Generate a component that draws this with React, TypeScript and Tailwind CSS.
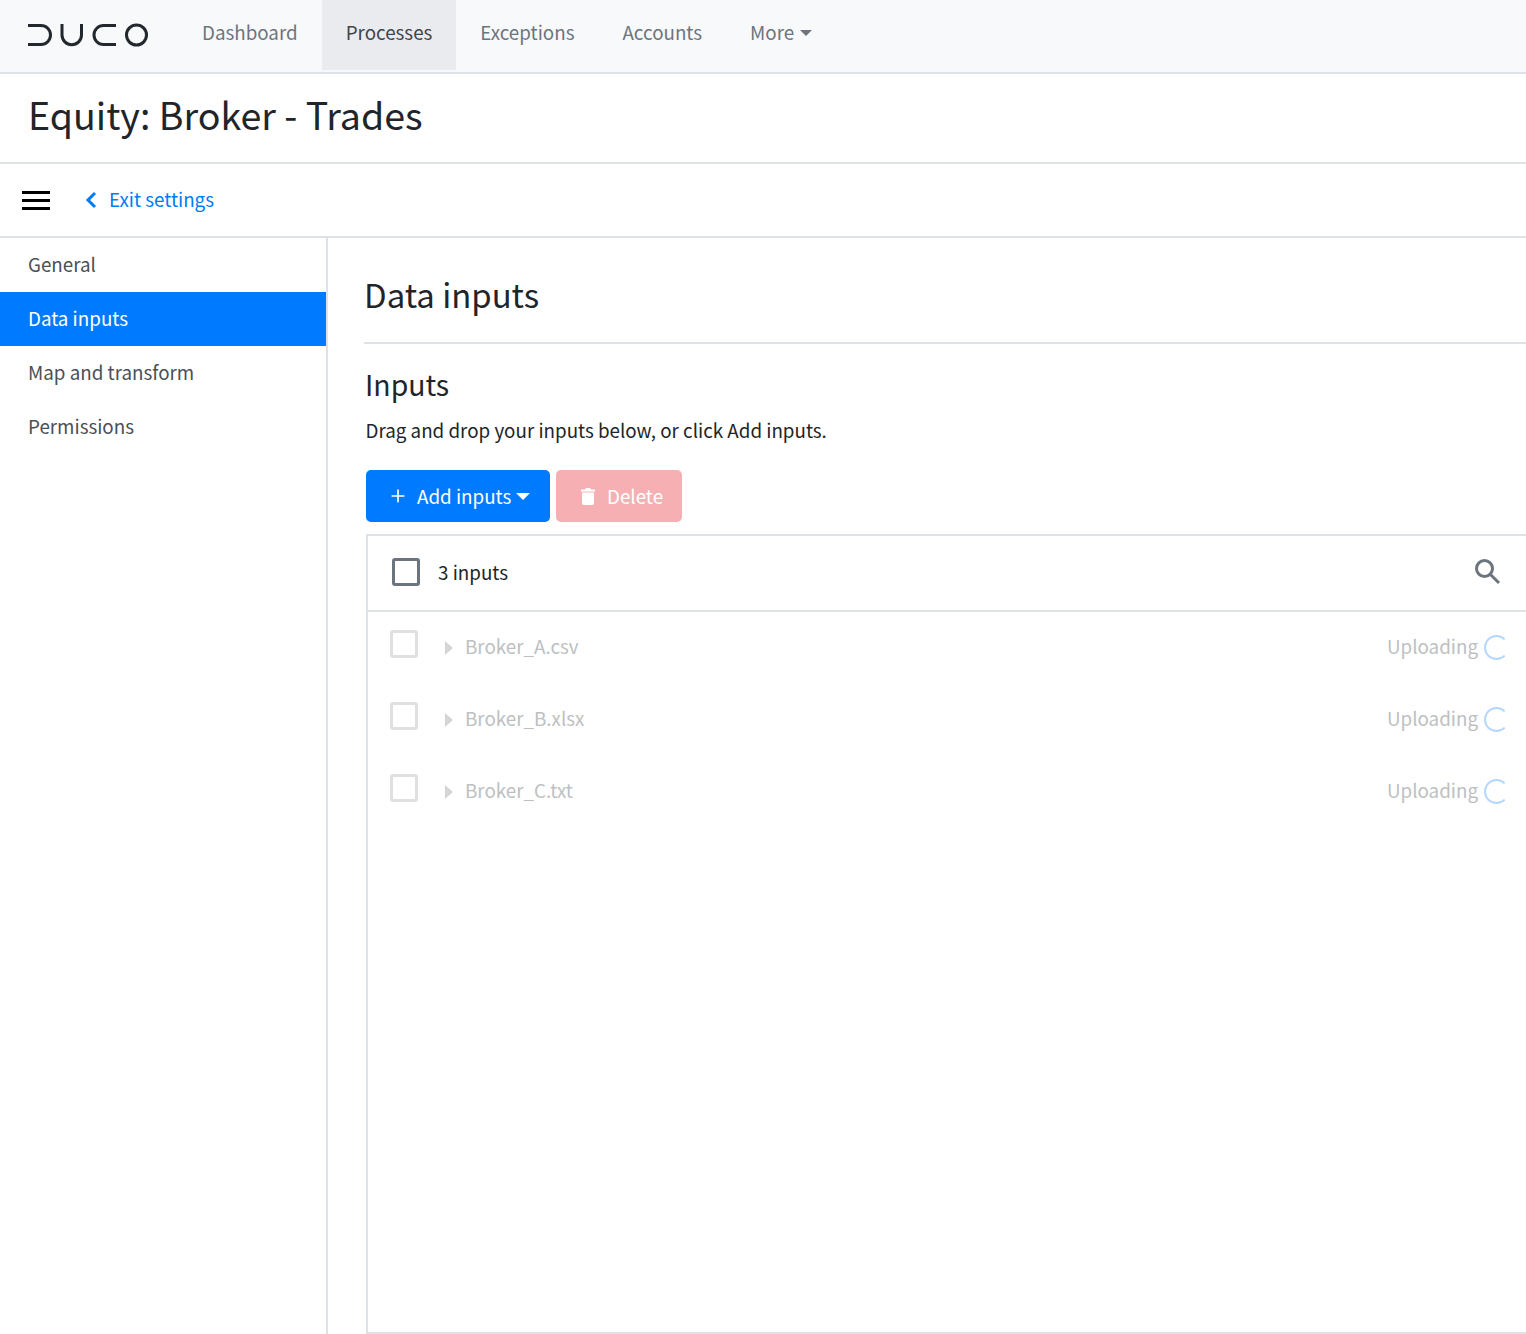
import { Plus } from "lucide-react";

function DucoLogo() {
  return (
    <svg width="122" height="24" viewBox="0 0 122 24" fill="none" stroke="#23272e" strokeWidth="3">
      <path d="M0 2.500 H13 A9.500 9.500 0 0 1 13 21.500 H0" />
      <path d="M34 1 V12 A9.500 9.500 0 0 0 53.500 12 V1" />
      <path d="M88 2.500 H75.500 A9.500 9.500 0 0 0 75.500 21.500 H88" />
      <circle cx="108.500" cy="12" r="10" />
    </svg>
  );
}

function NavItem({ label, active }: { label: string; active?: boolean }) {
  return (
    <div className={`h-[70px] px-6 flex items-center pb-[6px] text-[18.8px] ${active ? "bg-[#e9ebee] text-[#3f464d]" : "text-[#6c757d]"}`}>
      {label}
    </div>
  );
}

function Row({ name }: { name: string }) {
  return (
    <div className="h-[72px] flex items-center pl-[22px] pr-[17px] pb-[4px] text-[18.8px] text-[#bdbfc1]">
      <span className="w-[28px] h-[28px] border-[3px] border-[#dfe0e1] rounded-[3px] -mt-[4px]" />
      <span className="ml-[27px] mt-[4px] w-0 h-0 border-y-[7px] border-y-transparent border-l-[8px] border-l-[#d4d5d6]" />
      <span className="ml-[12px]">{name}</span>
      <span className="ml-auto">Uploading</span>
      <span className="ml-[6px] mt-[3px] w-[25px] h-[25px] rounded-full border-2 border-[#b3d7ff] border-r-transparent" />
    </div>
  );
}

export default function App() {
  return (
    <div className="h-[1334px] overflow-hidden bg-white flex flex-col font-['Noto_Sans_CJK_JP','Noto_Sans',sans-serif] text-[#212529]">
      <div className="h-[74px] shrink-0 bg-[#f8f9fa] border-b-2 border-[#dee2e6] flex items-start">
        <div className="pl-[28px] pt-[23px] w-[178px] shrink-0">
          <DucoLogo />
        </div>
        <NavItem label="Dashboard" />
        <NavItem label="Processes" active />
        <NavItem label="Exceptions" />
        <NavItem label="Accounts" />
        <div className="h-[70px] pl-6 pb-[6px] flex items-center gap-[6px] text-[18.8px] text-[#6c757d]">
          More <span className="mt-[2px] w-0 h-0 border-x-[6px] border-x-transparent border-t-[6px] border-t-[#6c757d]" />
        </div>
      </div>

      <div className="h-[90px] shrink-0 border-b-2 border-[#dee2e6] flex items-center pb-[8px] pl-[28px] text-[37.6px] text-[#212529]">
        Equity: Broker - Trades
      </div>

      <div className="h-[74px] shrink-0 border-b-2 border-[#dee2e6] flex items-center">
        <div className="ml-[22px] w-[28px] flex flex-col gap-[5px]">
          <span className="h-[3px] bg-black" />
          <span className="h-[3px] bg-black" />
          <span className="h-[3px] bg-black" />
        </div>
        <svg className="ml-[35px]" width="12" height="18" viewBox="0 0 12 18" fill="none" stroke="#007bff" strokeWidth="3">
          <path d="M10 2 L3 9 L10 16" />
        </svg>
        <span className="ml-[12px] pb-[2px] text-[18.8px] text-[#007bff]">Exit settings</span>
      </div>

      <div className="flex-1 flex min-h-0">
        <div className="w-[328px] shrink-0 border-r-2 border-[#dee2e6] text-[18.8px] text-[#495057]">
          <div className="h-[54px] pl-[28px] pb-[2px] flex items-center">General</div>
          <div className="h-[54px] pl-[28px] pb-[2px] flex items-center bg-[#007bff] text-white">Data inputs</div>
          <div className="h-[54px] pl-[28px] pb-[2px] flex items-center">Map and transform</div>
          <div className="h-[54px] pl-[28px] pb-[2px] flex items-center">Permissions</div>
        </div>

        <div className="flex-1 min-w-0 pl-[36px] flex flex-col">
          <div className="h-[106px] shrink-0 border-b-2 border-[#dee2e6] pt-[32px] text-[32.9px] leading-[48px]">
            Data inputs
          </div>
          <div className="pl-px pt-[20px] text-[28.4px] leading-[40px]">Inputs</div>
          <div className="pl-[1.500px] mt-[11px] text-[18.8px] leading-[30px]">Drag and drop your inputs below, or click Add inputs.</div>
          <div className="pl-[2px] mt-[25px] flex gap-[6px]">
            <button className="h-[52px] w-[184px] rounded-[5px] bg-[#007bff] text-white text-[18.8px] flex items-center pl-[22px]">
              <Plus size={20} strokeWidth={2} />
              <span className="ml-[9px]">Add inputs</span>
              <span className="ml-[5px] w-0 h-0 border-x-[7px] border-x-transparent border-t-[7px] border-t-white" />
            </button>
            <button className="h-[52px] w-[126px] rounded-[5px] bg-[#f6b0b4] text-white text-[18.8px] flex items-center pl-[24px]">
              <svg width="16" height="18" viewBox="0 0 16 18" fill="white">
                <path d="M1 2.500 H5 L6 1 H10 L11 2.500 H15 V4.500 H1 Z M2 5.500 H14 V16 A2 2 0 0 1 12 18 H4 A2 2 0 0 1 2 16 Z" />
              </svg>
              <span className="ml-[11px]">Delete</span>
            </button>
          </div>
          <div className="ml-[2px] mt-[12px] flex-1 border-2 border-r-0 border-[#dee2e6]">
            <div className="h-[76px] border-b-2 border-[#dee2e6] flex items-center pl-[24px] pr-[24px] text-[18.8px]">
              <span className="w-[28px] h-[28px] border-[3px] border-[#6c757d] rounded-[3px] -mt-[2px]" />
              <span className="ml-[18px] pb-[2px]">3 inputs</span>
              <svg className="ml-auto -mt-[2px]" width="28" height="28" viewBox="0 0 28 28" fill="none" stroke="#6c757d" strokeWidth="3">
                <circle cx="10.500" cy="10.500" r="8" />
                <path d="M16.500 16.500 L25 25" />
              </svg>
            </div>
            <Row name="Broker_A.csv" />
            <Row name="Broker_B.xlsx" />
            <Row name="Broker_C.txt" />
          </div>
        </div>
      </div>
    </div>
  );
}
